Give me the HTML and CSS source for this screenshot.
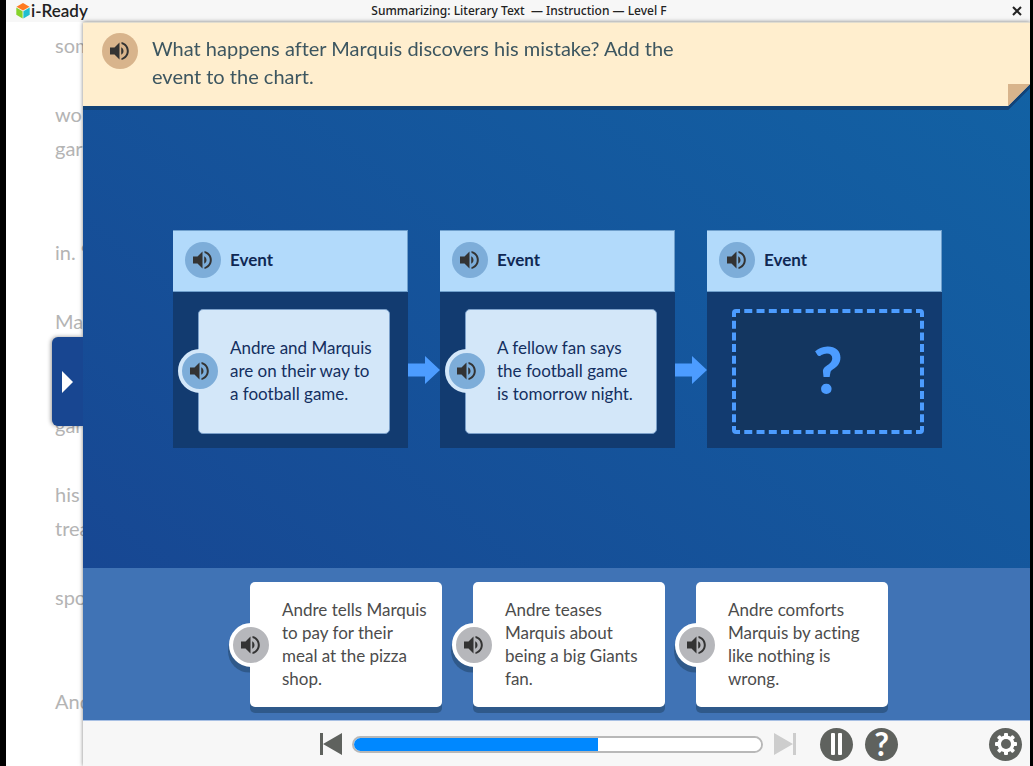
FILE: index.html
```html
<!doctype html>
<html lang="en">
<head>
  <meta charset="utf-8">
  <meta name="viewport" content="width=device-width, initial-scale=1">
  <title>Summarizing: Literary Text</title>
  <link rel="stylesheet" href="styles.css">
</head>
<body>
  <svg class="defs" aria-hidden="true">
    <symbol id="speaker" viewBox="0 0 24 24">
      <path d="M2 8.500v7h4.500l5 5V3.500l-5 5H2zm13.500 3.500c0-1.600-.8-3-2.300-3.800v7.600c1.500-.8 2.300-2.200 2.300-3.800zM13.500 3v1.900c3.200.8 5.300 3.800 5.300 7.100s-2.100 6.300-5.300 7.100V21c4.300-.9 7.300-4.600 7.300-9s-3-8.100-7.300-9z"/>
    </symbol>
    <symbol id="arrow" viewBox="0 0 32 28">
      <path d="M0 7.500h17V0l15 14-15 14v-7.500H0z"/>
    </symbol>
  </svg>

  <div class="app">
    <header class="title-bar">
      <div class="logo">
        <svg width="14" height="16" viewBox="0 0 14 16" aria-hidden="true">
          <path fill="#ff7a21" d="M7 0l6.500 3.800L7 7.600.500 3.800z"/>
          <path fill="#86d32b" d="M.300 4.600l6.300 3.600V15.500L.300 11.800z"/>
          <path fill="#1fbfd0" d="M13.700 4.600L7.400 8.200v7.300l6.300-3.700z"/>
        </svg>
        <span>i-Ready</span>
      </div>
      <h1>Summarizing: Literary Text &nbsp;— Instruction — Level F</h1>
      <button class="close" type="button" aria-label="Close">
        <svg width="10" height="10" viewBox="0 0 10 10"><path d="M1 1l8 8M9 1L1 9"/></svg>
      </button>
    </header>

    <div class="workspace">
      <aside class="passage">
        <p>som</p>
        <p class="long">wo<br>gar</p>
        <p>in. “</p>
        <p class="long">Ma</p>
        <p>gar</p>
        <p>his<br>trea</p>
        <p class="long">spo</p>
        <p>And</p>
      </aside>

      <main class="lesson">
        <button class="drawer-tab" type="button" aria-label="Show passage">
          <svg width="12" height="22" viewBox="0 0 12 22"><path d="M0 0l11 11L0 22z"/></svg>
        </button>

        <div class="prompt-shadow">
          <section class="prompt">
            <button class="audio" type="button" aria-label="Play question"><svg><use href="#speaker"/></svg></button>
            <p>What happens after Marquis discovers his mistake? Add the event to the chart.</p>
          </section>
        </div>

        <section class="chart">
          <article class="event">
            <header>
              <button class="audio" type="button" aria-label="Play heading"><svg><use href="#speaker"/></svg></button>
              <h2>Event</h2>
            </header>
            <div class="event-body">
              <div class="card">
                <button class="audio" type="button" aria-label="Play event"><svg><use href="#speaker"/></svg></button>
                <p>Andre and Marquis are on their way to a football game.</p>
              </div>
            </div>
          </article>
          <svg class="arrow" aria-hidden="true"><use href="#arrow"/></svg>
          <article class="event">
            <header>
              <button class="audio" type="button" aria-label="Play heading"><svg><use href="#speaker"/></svg></button>
              <h2>Event</h2>
            </header>
            <div class="event-body">
              <div class="card">
                <button class="audio" type="button" aria-label="Play event"><svg><use href="#speaker"/></svg></button>
                <p>A fellow fan says the football game is&nbsp;tomorrow night.</p>
              </div>
            </div>
          </article>
          <svg class="arrow" aria-hidden="true"><use href="#arrow"/></svg>
          <article class="event">
            <header>
              <button class="audio" type="button" aria-label="Play heading"><svg><use href="#speaker"/></svg></button>
              <h2>Event</h2>
            </header>
            <div class="event-body">
              <div class="slot">?</div>
            </div>
          </article>
        </section>

        <section class="choices">
          <div class="card">
            <button class="audio" type="button" aria-label="Play choice"><svg><use href="#speaker"/></svg></button>
            <p>Andre tells Marquis to pay for their meal at the pizza shop.</p>
          </div>
          <div class="card">
            <button class="audio" type="button" aria-label="Play choice"><svg><use href="#speaker"/></svg></button>
            <p>Andre teases Marquis about being a big Giants fan.</p>
          </div>
          <div class="card">
            <button class="audio" type="button" aria-label="Play choice"><svg><use href="#speaker"/></svg></button>
            <p>Andre comforts Marquis by acting like nothing is wrong.</p>
          </div>
        </section>

        <footer class="controls">
          <button class="step" type="button" aria-label="Previous">
            <svg width="22" height="22" viewBox="0 0 22 22"><path d="M0 0h3v22H0zM22 0v22L3 11z"/></svg>
          </button>
          <progress value="60" max="100" aria-label="Lesson progress"></progress>
          <button class="step" type="button" aria-label="Next" disabled>
            <svg width="22" height="22" viewBox="0 0 22 22"><path d="M19 0h3v22h-3zM0 0l19 11L0 22z"/></svg>
          </button>
          <button class="round pause" type="button" aria-label="Pause">
            <svg width="11" height="22" viewBox="0 0 11 22"><rect width="4" height="22" rx="1"/><rect x="7" width="4" height="22" rx="1"/></svg>
          </button>
          <button class="round help" type="button">?</button>
          <button class="round settings" type="button" aria-label="Settings">
            <svg width="24" height="24" viewBox="-12 -12 24 24">
              <rect x="-2" y="-11" width="4" height="22" rx="1"/>
              <rect x="-2" y="-11" width="4" height="22" rx="1" transform="rotate(45)"/>
              <rect x="-2" y="-11" width="4" height="22" rx="1" transform="rotate(90)"/>
              <rect x="-2" y="-11" width="4" height="22" rx="1" transform="rotate(135)"/>
              <circle r="8.500"/>
              <circle class="hole" r="5"/>
            </svg>
          </button>
        </footer>
      </main>
    </div>
  </div>
</body>
</html>
```
FILE: styles.css
```css
* {
  box-sizing: border-box;
}
body {
  margin: 0;
  background: #000;
  font-family: Lato, "Open Sans", sans-serif;
  font-variant-ligatures: none;
}
h1, h2, p {
  margin: 0;
}
button {
  border: none;
  padding: 0;
  background: none;
  font-family: inherit;
  cursor: pointer;
}
.defs {
  display: none;
}
.app {
  display: flex;
  flex-direction: column;
  height: 100vh;
  margin: 0 3px 0 6px;
  background: #fff;
}

/* title bar */
.title-bar {
  display: grid;
  grid-template-columns: 1fr auto 1fr;
  align-items: center;
  flex: none;
  height: 22px;
  padding: 0 8px 0 10px;
  background: #f7f7f7;
  color: #222;
}
.title-bar h1 {
  font: 500 12px/22px "Noto Sans", sans-serif;
}
.logo {
  display: flex;
  align-items: center;
  gap: 1px;
  font: 600 17px/20px Lato, sans-serif;
}
.close {
  display: flex;
  justify-self: end;
}
.close path {
  stroke: #222;
  stroke-width: 2;
}

.workspace {
  display: grid;
  grid-template-columns: 77px 1fr;
  flex: 1;
  min-height: 0;
}
.passage {
  min-height: 0;
  padding: 6px 0 0 49px;
  color: #b4b4b4;
  font-size: 20px;
  line-height: 34px;
  white-space: nowrap;
}
.passage p {
  margin-bottom: 35px;
}
.passage .long {
  margin-bottom: 70px;
}

.lesson {
  position: relative;
  display: flex;
  flex-direction: column;
  min-width: 0;
  background: linear-gradient(to top right, #184390, #1263a5);
  box-shadow: 0 0 4px rgba(0, 0, 0, 0.5);
}
.drawer-tab {
  position: absolute;
  top: 315px;
  right: 100%;
  width: 31px;
  height: 89px;
  padding-left: 10px;
  border-radius: 6px 0 0 6px;
  background: #184691;
  box-shadow: -1px 0 4px rgba(0, 0, 0, 0.4);
  clip-path: inset(-6px 0 -6px -6px);
  text-align: left;
}
.drawer-tab path {
  fill: #fff;
}
.drawer-tab svg {
  display: block;
}

.audio {
  display: flex;
  align-items: center;
  justify-content: center;
  flex: none;
  width: 36px;
  height: 36px;
  border-radius: 50%;
  background: #7dadd9;
}
.audio svg {
  width: 24px;
  height: 24px;
  fill: #333;
}

.prompt-shadow {
  filter: drop-shadow(0 4px 0 #124377);
}
.prompt {
  display: flex;
  gap: 14px;
  padding: 13px 19px 15px;
  border-top: 1px solid #e0dccf;
  background: linear-gradient(#d8b48c, #d8b48c) right bottom / 22px 22px no-repeat, #ffeece;
  clip-path: polygon(0 0, 100% 0, 100% calc(100% - 22px), calc(100% - 22px) 100%, 0 100%);
  color: #3d5660;
}
.prompt .audio {
  margin-top: -3px;
  background: #d8b48c;
}
.prompt p {
  max-width: 560px;
  margin-top: -2px;
  padding-bottom: 1px;
  font-size: 20px;
  line-height: 28px;
}

/* event chart */
.chart {
  display: flex;
  align-items: center;
  justify-content: center;
  flex: 1;
  padding: 3px 0 0 2px;
}
.event {
  flex: 0 1 235px;
  background: #123b70;
}
.event header {
  display: flex;
  align-items: center;
  gap: 9px;
  height: 62px;
  padding: 0 0 1px 12px;
  border: 1px solid #6f9fcc;
  border-width: 1px 1px 1px 0;
  background: #b2dafb;
}
.event h2 {
  padding-bottom: 2px;
  color: #0f2854;
  font-size: 17px;
}
.event-body {
  padding: 17px 18px 14px 25px;
}
.arrow {
  flex: none;
  width: 32px;
  height: 28px;
  margin-top: 62px;
  fill: #4c9cff;
}
.card {
  position: relative;
  display: flex;
  align-items: center;
  height: 125px;
  padding: 0 12px 2px 32px;
  border-radius: 5px;
  font-size: 17px;
  line-height: 23px;
}
.card .audio {
  position: absolute;
  top: calc(50% - 22px);
  left: -21px;
  width: 44px;
  height: 44px;
  border: 4px solid #d3e7f9;
}
.event .card {
  padding-left: 31px;
  border: 1px solid #7a9fc9;
  background: #d3e7f9;
  color: #142f60;
}
.slot {
  display: flex;
  align-items: center;
  justify-content: center;
  height: 125px;
  padding-bottom: 4px;
  border: 4px dashed #4c9cff;
  border-radius: 4px;
  background: #133660;
  color: #4c9cff;
  font-size: 64px;
  font-weight: 900;
}

/* answer choices */
.choices {
  display: flex;
  justify-content: center;
  gap: 31px;
  padding: 14px 0 13px 25px;
  background: #4073b5;
}
.choices .card {
  flex: 0 1 192px;
  background: #fff;
  box-shadow: 0 6px 0 #2f598a;
  color: #4c4c4c;
}
.choices .audio {
  border-color: #fff;
  background: #b6b7bb;
}
/* shadow of the button, kept behind the card */
.choices .card::before {
  content: "";
  position: absolute;
  top: calc(50% - 16px);
  left: -22px;
  width: 44px;
  height: 44px;
  border-radius: 50%;
  background: #2f598a;
  clip-path: inset(0 22px 0 0);
}

/* bottom controls */
.controls {
  display: flex;
  align-items: center;
  height: 46px;
  padding: 1px 8px 0 25%;
  border-top: 1px solid #a8c0e4;
  background: #f7f7f7;
}
.controls svg {
  display: block;
}
.step path {
  fill: #5f625e;
}
.step:disabled path {
  fill: #cdcdcd;
}
progress {
  flex: 1;
  min-width: 0;
  height: 17px;
  margin: 0 11px 0 10px;
  overflow: hidden;
  border: 2px solid #b8b8b8;
  border-radius: 9px;
  appearance: none;
}
progress::-webkit-progress-bar {
  background: #fff;
}
progress::-webkit-progress-value {
  background: #0088ff;
}
.round {
  display: flex;
  align-items: center;
  justify-content: center;
  width: 33px;
  height: 33px;
  border-radius: 50%;
  background: #5f625e;
  color: #fff;
  fill: #fff;
}
.pause {
  margin: 0 12px 0 24px;
}
.help {
  padding-bottom: 2px;
  font-size: 32px;
  font-weight: 700;
  line-height: 31px;
}
.settings {
  margin-left: 91px;
}
.hole {
  fill: #5f625e;
}
```
